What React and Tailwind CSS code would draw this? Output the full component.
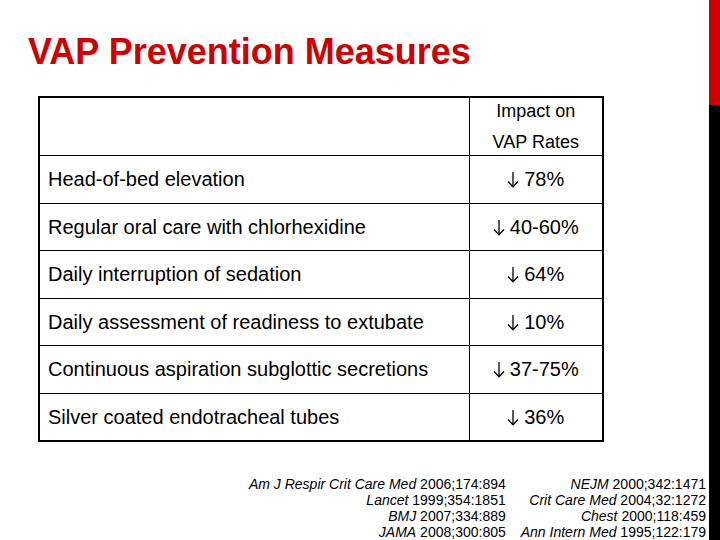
import React from "react";

const rows = [
  ["Head-of-bed elevation", "78%"],
  ["Regular oral care with chlorhexidine", "40-60%"],
  ["Daily interruption of sedation", "64%"],
  ["Daily assessment of readiness to extubate", "10%"],
  ["Continuous aspiration subglottic secretions", "37-75%"],
  ["Silver coated endotracheal tubes", "36%"],
];

const leftRefs = [
  ["Am J Respir Crit Care Med", "2006;174:894"],
  ["Lancet", "1999;354:1851"],
  ["BMJ", "2007;334:889"],
  ["JAMA", "2008;300:805"],
];

const rightRefs = [
  ["NEJM", "2000;342:1471"],
  ["Crit Care Med", "2004;32:1272"],
  ["Chest", "2000;118:459"],
  ["Ann Intern Med", "1995;122:179"],
];

function DownArrow() {
  return (
    <svg className="inline-block align-[-2px] mr-[5px]" width="12" height="17" viewBox="0 0 12 17" fill="none" stroke="black" strokeWidth="1.3">
      <path d="M6 1V15.5" />
      <path d="M1 10.5L6 15.8L11 10.5" />
    </svg>
  );
}

function Refs({ items }) {
  return (
    <div className="flex flex-col items-end text-[14px] leading-[16px] text-black">
      {items.map(([j, c]) => (
        <div key={j}>
          <span className="italic">{j}</span> {c}
        </div>
      ))}
    </div>
  );
}

export default function App() {
  return (
    <div className="w-[720px] h-[540px] bg-white flex overflow-hidden font-['Liberation_Sans',Arial,sans-serif]">
      <div className="flex-1 flex flex-col">
        {/* Title */}
        <h1 className="pl-[28px] pt-[32px] h-[96px] text-[36px] leading-[40px] font-bold text-[#cc0000]">
          VAP Prevention Measures
        </h1>

        {/* Table */}
        <table className="ml-[38px] w-[566px] border-collapse border-2 border-black text-[20px] text-black">
          <tbody>
            <tr>
              <td className="w-[430px] border border-black p-0" />
              <td className="border border-black p-0">
                <div className="h-[57px] flex flex-col justify-center items-center text-[18px] leading-[31px]">
                  <span>Impact on</span>
                  <span>VAP Rates</span>
                </div>
              </td>
            </tr>
            {rows.map(([label, val]) => (
              <tr key={label} className="h-[47.5px]">
                <td className="border border-black px-[8px]">{label}</td>
                <td className="border border-black text-center">
                  <DownArrow />
                  {val}
                </td>
              </tr>
            ))}
          </tbody>
        </table>

        {/* References */}
        <div className="flex justify-end gap-[15px] mt-[34px] pr-[3px]">
          <Refs items={leftRefs} />
          <Refs items={rightRefs} />
        </div>
      </div>

      {/* Right accent bar */}
      <div className="w-[11px] flex flex-col">
        <div className="h-[105px] bg-[#cc0000]" />
        <div className="flex-1 bg-black" />
      </div>
    </div>
  );
}
